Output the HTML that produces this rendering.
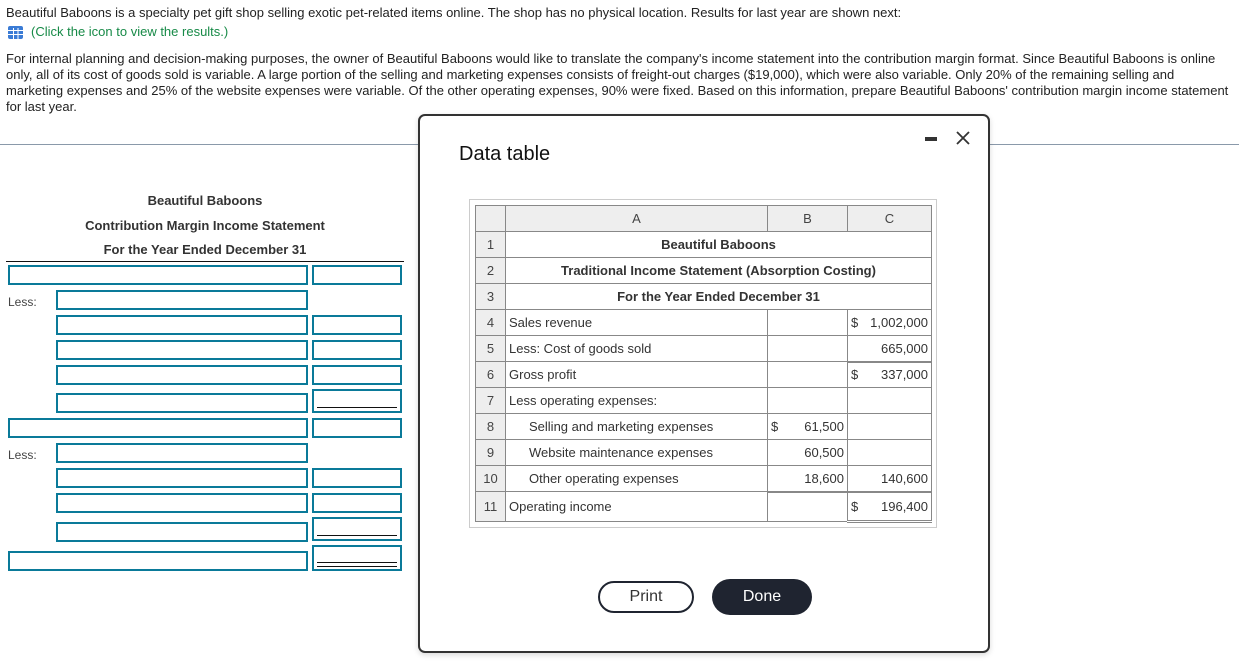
<!DOCTYPE html>
<html><head><meta charset="utf-8"><style>
*{margin:0;padding:0;box-sizing:border-box}
body{width:1239px;height:668px;background:#fff;font-family:"Liberation Sans",Arial,sans-serif;color:#222;position:relative;overflow:hidden;font-size:13px}
.a{position:absolute}
.p{left:6px;line-height:16px;white-space:nowrap}
.bx{position:absolute;border:2px solid #0a7a99;height:20px}
.lb{position:absolute;left:8px;font-size:12px;color:#444}
.h{position:absolute;width:400px;left:5px;text-align:center;font-weight:bold;color:#333;font-size:13px}
.dl{position:absolute;left:3px;right:3px;border-top:1.5px solid #111}
table{border-collapse:collapse;position:absolute;left:475px;top:205px;font-size:13px;color:#333}
td{border:1px solid #888;padding:0 3px;height:26px;white-space:nowrap}
td.n{background:#eee;text-align:center;width:30px;color:#444;padding:0}
td.c{text-align:center;font-weight:bold}
.hd td{background:#eee;text-align:center;font-weight:normal;color:#444}
.r{text-align:right}
</style></head><body>
<div class="a p" style="top:5px">Beautiful Baboons is a specialty pet gift shop selling exotic pet-related items online. The shop has no physical location. Results for last year are shown next:</div>
<div class="a" style="left:8px;top:26px;width:15px;height:13px;background:#3a7bd5;border-radius:2px"><svg width="15" height="13"><g stroke="#fff" stroke-width="1"><line x1="0" y1="4.5" x2="15" y2="4.5"/><line x1="0" y1="8.5" x2="15" y2="8.5"/><line x1="5.5" y1="2" x2="5.5" y2="13"/><line x1="10" y1="2" x2="10" y2="13"/></g></svg></div>
<div class="a" style="left:31px;top:24px;color:#178a47;line-height:16px">(Click the icon to view the results.)</div>
<div class="a p" style="top:51px">For internal planning and decision-making purposes, the owner of Beautiful Baboons would like to translate the company's income statement into the contribution margin format. Since Beautiful Baboons is online<br>only, all of its cost of goods sold is variable. A large portion of the selling and marketing expenses consists of freight-out charges ($19,000), which were also variable. Only 20% of the remaining selling and<br>marketing expenses and 25% of the website expenses were variable. Of the other operating expenses, 90% were fixed. Based on this information, prepare Beautiful Baboons' contribution margin income statement<br>for last year.</div>
<div class="a" style="left:0;top:144px;width:1239px;border-top:1px solid #8a99aa"></div>

<div class="h" style="top:193px">Beautiful Baboons</div>
<div class="h" style="top:218px">Contribution Margin Income Statement</div>
<div class="h" style="top:242px">For the Year Ended December 31</div>
<div class="a" style="left:6px;top:261px;width:398px;border-top:1.5px solid #111"></div>

<div class="bx" style="left:8px;top:265px;width:300px"></div><div class="bx" style="left:312px;top:265px;width:90px"></div>
<div class="lb" style="top:295px">Less:</div>
<div class="bx" style="left:56px;top:290px;width:252px"></div>
<div class="bx" style="left:56px;top:315px;width:252px"></div><div class="bx" style="left:312px;top:315px;width:90px"></div>
<div class="bx" style="left:56px;top:340px;width:252px"></div><div class="bx" style="left:312px;top:340px;width:90px"></div>
<div class="bx" style="left:56px;top:365px;width:252px"></div><div class="bx" style="left:312px;top:365px;width:90px"></div>
<div class="bx" style="left:56px;top:393px;width:252px"></div><div class="bx" style="left:312px;top:389px;width:90px;height:24px"><div class="dl" style="top:16px"></div></div>
<div class="bx" style="left:8px;top:418px;width:300px"></div><div class="bx" style="left:312px;top:418px;width:90px"></div>
<div class="lb" style="top:448px">Less:</div>
<div class="bx" style="left:56px;top:443px;width:252px"></div>
<div class="bx" style="left:56px;top:468px;width:252px"></div><div class="bx" style="left:312px;top:468px;width:90px"></div>
<div class="bx" style="left:56px;top:493px;width:252px"></div><div class="bx" style="left:312px;top:493px;width:90px"></div>
<div class="bx" style="left:56px;top:522px;width:252px"></div><div class="bx" style="left:312px;top:517px;width:90px;height:24px"><div class="dl" style="top:16px"></div></div>
<div class="bx" style="left:8px;top:551px;width:300px"></div><div class="bx" style="left:312px;top:545px;width:90px;height:26px"><div class="dl" style="top:15px"></div><div class="dl" style="top:19px"></div></div>

<div class="a" style="left:418px;top:114px;width:572px;height:539px;border:2px solid #333;border-radius:7px;background:#fff;box-shadow:0 2px 6px rgba(0,0,0,.15)"></div>
<div class="a" style="left:459px;top:143px;font-size:20px;color:#111">Data table</div>
<div class="a" style="left:925px;top:137px;width:12px;height:4px;background:#333"></div>
<svg class="a" style="left:955px;top:130px" width="16" height="16"><path d="M2 2L14 14M14 2L2 14" stroke="#333" stroke-width="1.8"/></svg>
<div class="a" style="left:469px;top:199px;width:468px;height:329px;border:1px solid #ccc"></div>
<table>
<tr class="hd"><td class="n"></td><td style="width:262px">A</td><td style="width:80px">B</td><td style="width:84px">C</td></tr>
<tr><td class="n">1</td><td class="c" colspan="3">Beautiful Baboons</td></tr>
<tr><td class="n">2</td><td class="c" colspan="3">Traditional Income Statement (Absorption Costing)</td></tr>
<tr><td class="n">3</td><td class="c" colspan="3">For the Year Ended December 31</td></tr>
<tr><td class="n">4</td><td>Sales revenue</td><td></td><td><span>$</span><span style="float:right">1,002,000</span></td></tr>
<tr><td class="n">5</td><td>Less: Cost of goods sold</td><td></td><td class="r" style="border-bottom:2px solid #888">665,000</td></tr>
<tr><td class="n">6</td><td>Gross profit</td><td></td><td><span>$</span><span style="float:right">337,000</span></td></tr>
<tr><td class="n">7</td><td>Less operating expenses:</td><td></td><td></td></tr>
<tr><td class="n">8</td><td style="padding-left:23px">Selling and marketing expenses</td><td><span>$</span><span style="float:right">61,500</span></td><td></td></tr>
<tr><td class="n">9</td><td style="padding-left:23px">Website maintenance expenses</td><td class="r">60,500</td><td></td></tr>
<tr><td class="n">10</td><td style="padding-left:23px">Other operating expenses</td><td class="r" style="border-bottom:2px solid #888">18,600</td><td class="r" style="border-bottom:2px solid #888">140,600</td></tr>
<tr><td class="n" style="height:30px">11</td><td>Operating income</td><td></td><td style="border-bottom:3px double #888"><span>$</span><span style="float:right">196,400</span></td></tr>
</table>
<div class="a" style="left:598px;top:581px;width:96px;height:32px;border:2px solid #1f2430;border-radius:16px;text-align:center;line-height:28px;font-size:16px;color:#333">Print</div>
<div class="a" style="left:712px;top:579px;width:100px;height:36px;background:#1f2430;border-radius:18px;text-align:center;line-height:36px;font-size:16px;color:#fff">Done</div>
</body></html>
